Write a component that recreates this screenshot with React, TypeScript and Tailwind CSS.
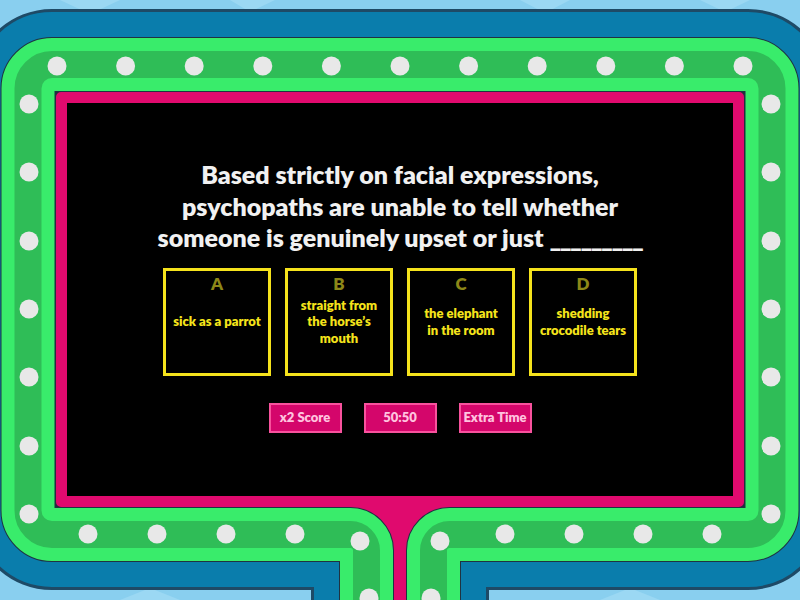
import React from 'react';

// centre line of the dotted green track; every band of the frame is a stroke of it
const FRAME =
  'M 366.5 620 L 366.5 550.5 A 16 16 0 0 0 350.5 534.5 L 52 534.5 A 24 24 0 0 1 28 510.5 ' +
  'L 28 88.5 A 24 24 0 0 1 52 64.5 L 748 64.5 A 24 24 0 0 1 772 88.5 L 772 510.5 ' +
  'A 24 24 0 0 1 748 534.5 L 449.5 534.5 A 16 16 0 0 0 433.5 550.5 L 433.5 620';

const topDots = Array.from({ length: 11 }, (_, i) => [57 + i * 68.6, 66]);
const sideY = [104, 172, 241, 309, 377, 446, 514];
const bottomX = [88, 157, 226, 295];

const dots: number[][] = [
  ...topDots,
  ...sideY.map(y => [29, y]),
  ...sideY.map(y => [771, y]),
  ...bottomX.map(x => [x, 534]),
  ...bottomX.map(x => [800 - x, 534]),
  [360, 541],
  [440, 541],
  [369, 598],
  [431, 598],
];

const answers = [
  { letter: 'A', lines: ['sick as a parrot'] },
  { letter: 'B', lines: ['straight from', 'the horse\u2019s', 'mouth'] },
  { letter: 'C', lines: ['the elephant', 'in the room'] },
  { letter: 'D', lines: ['shedding', 'crocodile tears'] },
];

const powerUps = ['x2 Score', '50:50', 'Extra Time'];

function Frame() {
  return (
    <svg className="absolute inset-0" width="800" height="600" viewBox="0 0 800 600">
      <rect width="800" height="600" fill="#89cfef" />
      <polygon points="60,0 90,14 120,0" fill="#9bd8f3" />
      <polygon points="230,0 250,12 275,0" fill="#9bd8f3" />
      <polygon points="520,0 545,13 570,0" fill="#9bd8f3" />
      <polygon points="700,0 725,12 750,0" fill="#9bd8f3" />
      <polygon points="120,600 150,588 180,600" fill="#9bd8f3" />
      <polygon points="600,600 630,588 660,600" fill="#9bd8f3" />
      <path d={FRAME} fill="none" stroke="#1e4a66" strokeWidth="111" strokeLinejoin="round" />
      <path d={FRAME} fill="none" stroke="#0a7dac" strokeWidth="105" strokeLinejoin="round" />
      <rect x="40" y="80" width="720" height="440" fill="#20303c" />
      <rect x="340" y="495" width="120" height="110" fill="#e00a6e" />
      <path d={FRAME} fill="none" stroke="#1f3342" strokeWidth="55" strokeLinejoin="round" />
      <path d={FRAME} fill="none" stroke="#39ec6b" strokeWidth="53" strokeLinejoin="round" />
      <path d={FRAME} fill="none" stroke="#2fbd57" strokeWidth="27" strokeLinejoin="round" />
      {dots.map(([x, y], i) => (
        <circle key={i} cx={x} cy={y} r="9.5" fill="#e8e8e8" />
      ))}
    </svg>
  );
}

export default function App() {
  return (
    <div className="relative h-[600px] w-[800px] overflow-hidden font-['Lato',sans-serif]">
      <Frame />
      <div className="relative px-[56px] pt-[92px]">
        <div className="h-[415px] rounded-[5px] border-[11px] border-[#e00a6e] bg-black">
          <div className="flex h-full flex-col items-center pt-[56px]">
            <p className="text-center text-[25px] font-extrabold leading-[31.5px] text-[#f1f1f1]">
              Based strictly on facial expressions,
              <br />
              psychopaths are unable to tell whether
              <br />
              someone is genuinely upset or just <span className="tracking-[-1.5px]">_________</span>
            </p>

            <div className="mt-[14px] flex gap-[14px]">
              {answers.map(a => (
                <div
                  key={a.letter}
                  className="flex h-[108px] w-[108px] flex-col border-[3px] border-[#f5e21c]"
                >
                  <div className="h-[23px] pt-[3px] text-center text-[17px] font-extrabold leading-[20px] text-[#8c8718]">
                    {a.letter}
                  </div>
                  <div className="flex flex-1 items-center justify-center whitespace-nowrap text-center text-[13px] font-extrabold leading-[16.5px] text-[#f5e41b]">
                    <span>
                      {a.lines.map((l, i) => (
                        <React.Fragment key={i}>
                          {i > 0 && <br />}
                          {l}
                        </React.Fragment>
                      ))}
                    </span>
                  </div>
                  <div className="h-[23px]" />
                </div>
              ))}
            </div>

            <div className="mt-[27px] flex gap-[22px]">
              {powerUps.map(p => (
                <div
                  key={p}
                  className="flex h-[30px] w-[73px] items-center justify-center whitespace-nowrap border-2 border-[#f8529d] bg-[#d4066b] text-[13px] font-extrabold text-[#ffc3df]"
                >
                  {p}
                </div>
              ))}
            </div>
          </div>
        </div>
      </div>
    </div>
  );
}
